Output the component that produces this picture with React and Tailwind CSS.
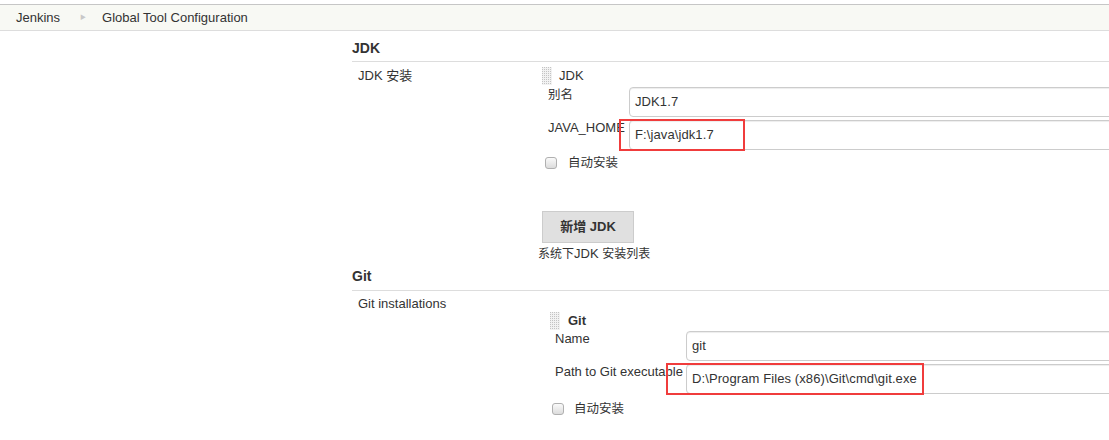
import React from "react";

function Handle() {
  const dots = [];
  for (let r = 0; r < 9; r++) {
    for (let c = 0; c < 5; c++) {
      dots.push(<rect key={r + "-" + c} x={c * 2} y={r * 2} width="1" height="1" fill="#c4c4c4" />);
    }
  }
  return (
    <svg width="10" height="18" viewBox="0 0 10 18" className="block">
      <rect x="0" y="0" width="10" height="18" fill="#f2f2f2" />
      {dots}
    </svg>
  );
}

function Checkbox() {
  return (
    <span className="inline-block w-[12px] h-[12px] rounded-[3px] border border-[#b0b0b0] bg-gradient-to-b from-[#fafafa] to-[#dcdcdc]" />
  );
}

function Field({ label, value, labelW, boxW, boxL }) {
  return (
    <div className="flex items-start">
      <div
        className="shrink-0 pl-[6px] leading-[16px] whitespace-nowrap overflow-hidden"
        style={{ width: labelW }}
      >
        {label}
      </div>
      <div className="relative flex-1 mr-[-20px]">
        <div className="h-[30px] border border-[#cccccc] rounded-[4px] bg-white shadow-[inset_0_1px_1px_rgba(0,0,0,0.075)] pl-[5px] flex items-center text-[13px] tracking-[0.1px] text-[#333]">
          {value}
        </div>
        {boxW ? (
          <div
            className="absolute top-[-1px] h-[32px] border-2 border-[#f03c3c]"
            style={{ width: boxW, left: boxL }}
          />
        ) : null}
      </div>
    </div>
  );
}

export default function App() {
  return (
    <div className="w-[1109px] h-[440px] overflow-hidden bg-white text-[13px] text-[#333] font-['Liberation_Sans','Noto_Sans_CJK_SC',sans-serif]">
      <div className="h-[4px]" />
      <div className="h-[27px] border-t border-b border-t-[#c6c6c6] border-b-[#dddddd] bg-[#f8f9f4] flex items-center pl-[16px]">
        <span>Jenkins</span>
        <span className="ml-[20px] mr-[16px] text-[6px] text-[#c8c8c8]">▶</span>
        <span>Global Tool Configuration</span>
      </div>

      <div className="flex">
        <div className="w-[352px] shrink-0" />
        <div className="flex-1 min-w-0">
          {/* JDK section */}
          <div className="pt-[9px] pb-[4px] leading-[17px] text-[14px] font-bold border-b border-[#dddddd]">
            JDK
          </div>
          <div className="flex">
            <div className="w-[190px] shrink-0 pl-[6px] pt-[6px] leading-[16px]">JDK 安装</div>
            <div className="flex-1 min-w-0 pt-[5px]">
              <div className="flex items-center">
                <Handle />
                <span className="ml-[7px] leading-[16px]">JDK</span>
              </div>
              <div className="mt-[2px] flex flex-col gap-[3px]">
                <Field label={<span className="text-[12.5px]">别名</span>} value="JDK1.7" labelW={87} />
                <Field label="JAVA_HOME" value="F:\java\jdk1.7" labelW={87} boxW={126} boxL={-10} />
              </div>
              <div className="mt-[5px] flex items-center leading-[16px]">
                <span className="ml-[3px] flex"><Checkbox /></span>
                <span className="ml-[11px] text-[12.5px]">自动安装</span>
              </div>
              <button className="mt-[40px] w-[92px] h-[32px] bg-[#e0e0e0] border border-[#cccccc] font-bold text-[13px] text-[#333]">
                新增 JDK
              </button>
              <div className="mt-[3px] ml-[-4px] leading-[16px]">
                <span className="text-[12px]">系统下</span>JDK <span className="text-[12px]">安装列表</span>
              </div>
            </div>
          </div>

          {/* Git section */}
          <div className="mt-[6px] pb-[5px] leading-[17px] text-[14px] font-bold border-b border-[#dddddd]">
            Git
          </div>
          <div className="flex">
            <div className="w-[197px] shrink-0 pl-[6px] pt-[5px] leading-[16px]">Git installations</div>
            <div className="flex-1 min-w-0 pt-[21px]">
              <div className="flex items-center ml-[1px]">
                <Handle />
                <span className="ml-[8px] leading-[16px] font-bold">Git</span>
              </div>
              <div className="mt-[1px] flex flex-col gap-[3px]">
                <Field label="Name" value="git" labelW={137} />
                <Field label="Path to Git executable" value="D:\Program Files (x86)\Git\cmd\git.exe" labelW={137} boxW={258} boxL={-20} />
              </div>
              <div className="mt-[7px] flex items-center leading-[16px]">
                <span className="ml-[3px] flex"><Checkbox /></span>
                <span className="ml-[10px] text-[12.5px]">自动安装</span>
              </div>
            </div>
          </div>
        </div>
      </div>
    </div>
  );
}
